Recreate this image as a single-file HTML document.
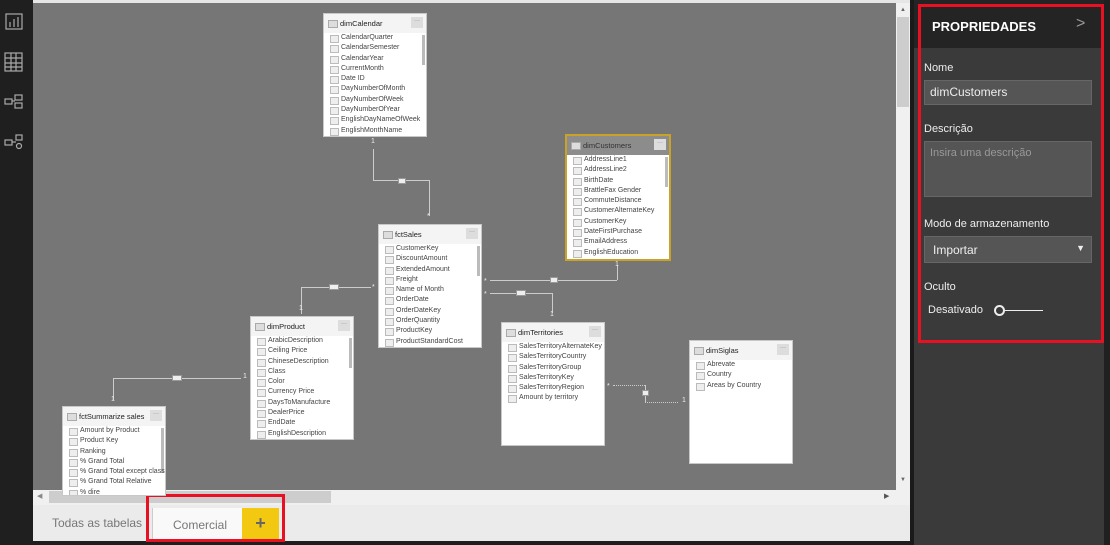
<!DOCTYPE html>
<html><head><meta charset="utf-8">
<style>
*{margin:0;padding:0;box-sizing:border-box}
body{width:1110px;height:545px;overflow:hidden;background:#1e1e1e;font-family:"Liberation Sans",sans-serif;position:relative}
.abs{position:absolute}
#nav{left:0;top:0;width:33px;height:545px;background:#1f1f1f}
#canvas{left:33px;top:3px;width:863px;height:487px;background:#767676}
#vs{left:896px;top:3px;width:14px;height:487px;background:#f0f0f0}
#hs{left:33px;top:490px;width:877px;height:15px;background:#f0f0f0}
#tabs{left:33px;top:505px;width:877px;height:36px;background:#ebebeb}
.tbl{position:absolute;background:#fff;border:1px solid #c8c8c8;overflow:hidden;font-size:7px;color:#444}
.tbl .h{height:19px;background:#f4f4f4;font-size:7.5px;padding:5px 0 0 16px;position:relative;color:#222}
.tbl .h:before{content:"";position:absolute;left:4px;top:6px;width:8px;height:6px;border:1px solid #aaa;background:#ddd}
.tbl .h i{position:absolute;right:3px;top:3px;width:12px;height:11px;background:#ddd;font-style:normal;font-size:6px;text-align:center;line-height:9px;color:#777}
.tbl .r{height:10.3px;line-height:10px;padding-left:17px;position:relative;white-space:nowrap}
.tbl .r:before{content:"";position:absolute;left:6px;top:2px;width:7px;height:6px;border:1px solid #bbb;background:#eee}
.tbl .sb{position:absolute;right:1px;top:21px;width:3px;height:30px;background:#bbb}
.ln{position:absolute;background:#ccc}
.num{position:absolute;color:#eee;font-size:7px}
.kb{position:absolute;width:8px;height:6px;background:#eee;border:1px solid #999}
</style></head><body>
<div id="nav" class="abs">
<svg width="33" height="160" style="position:absolute;left:0;top:0">
<g fill="none" stroke="#aaa" stroke-width="1.2">
<rect x="6" y="14" width="16" height="15"/><path d="M10 27v-5M14 27v-8M18 27v-10"/>
<rect x="5" y="53" width="17" height="18"/><path d="M5 58h17M5 63h17M5 67h17M11 53v18M16 53v18"/>
<rect x="5" y="99" width="7" height="5"/><rect x="15" y="95" width="7" height="5"/><rect x="15" y="103" width="7" height="5"/><path d="M12 101h3"/>
<rect x="5" y="140" width="7" height="5"/><rect x="16" y="135" width="6" height="5"/><circle cx="19" cy="146" r="2.5"/><path d="M12 142h4"/>
</g></svg>
</div>
<div id="canvas" class="abs"></div>
<div id="vs" class="abs"><div class="abs" style="left:1px;top:14px;width:12px;height:90px;background:#cdcdcd"></div><div class="abs" style="left:4px;top:4px;font-size:6px;color:#666">▲</div><div class="abs" style="left:4px;top:474px;font-size:6px;color:#666">▼</div></div>
<div id="hs" class="abs"><div class="abs" style="left:16px;top:1px;width:282px;height:12px;background:#cdcdcd"></div><div class="abs" style="left:4px;top:2px;font-size:7px;color:#888">◀</div><div class="abs" style="left:851px;top:2px;font-size:7px;color:#555">▶</div></div>
<div id="tabs" class="abs">
<div class="abs" style="left:19px;top:11px;font-size:12px;color:#777">Todas as tabelas</div>
<div class="abs" style="left:119px;top:3px;width:90px;height:31px;background:#f9f9f9;border-left:1px solid #ccc"><div style="padding:10px 0 0 20px;font-size:12px;color:#777">Comercial</div></div>
<div class="abs" style="left:209px;top:3px;width:37px;height:31px;background:#f2c811;color:#666;font-size:18px;font-weight:bold;text-align:center;line-height:30px">+</div>
<div class="abs" style="left:113px;top:-11px;width:139px;height:48px;border:3px solid #e81123"></div>
</div>
<div class="abs" style="left:910px;top:0;width:4px;height:545px;background:#1a1a1a"></div>
<div class="abs" style="left:914px;top:0;width:196px;height:545px;background:#3a3a3a"></div>
<div class="abs" style="left:914px;top:0;width:196px;height:48px;background:#242424"></div>
<div class="abs" style="left:1104px;top:0;width:6px;height:545px;background:#202020"></div>
<div class="abs" style="left:932px;top:19px;color:#fff;font-size:13px;font-weight:bold">PROPRIEDADES</div>
<div class="abs" style="left:1076px;top:15px;color:#999;font-size:16px">&gt;</div>
<div class="abs" style="left:924px;top:62px;color:#eee;font-size:11px">Nome</div>
<div class="abs" style="left:924px;top:80px;width:168px;height:25px;background:#555;border:1px solid #666;color:#eee;font-size:12px;padding:4px 5px">dimCustomers</div>
<div class="abs" style="left:924px;top:123px;color:#eee;font-size:11px">Descrição</div>
<div class="abs" style="left:924px;top:141px;width:168px;height:56px;background:#555;border:1px solid #666;color:#999;font-size:11px;padding:5px 5px">Insira uma descrição</div>
<div class="abs" style="left:924px;top:218px;color:#eee;font-size:11px">Modo de armazenamento</div>
<div class="abs" style="left:924px;top:236px;width:168px;height:27px;background:#555;border:1px solid #666;color:#eee;font-size:12px;padding:6px 8px">Importar<span style="position:absolute;right:6px;top:6px;font-size:9px">▼</span></div>
<div class="abs" style="left:924px;top:281px;color:#eee;font-size:11px">Oculto</div>
<div class="abs" style="left:928px;top:304px;color:#eee;font-size:11px">Desativado</div>
<div class="abs" style="left:994px;top:305px;width:11px;height:11px;border:2px solid #eee;border-radius:50%"></div>
<div class="abs" style="left:1005px;top:310px;width:38px;height:1px;background:#eee"></div>
<div class="abs" style="left:918px;top:4px;width:186px;height:339px;border:3px solid #e81123"></div>

<!-- lines -->
<div class="ln" style="left:373px;top:149px;width:1px;height:31px"></div>
<div class="ln" style="left:373px;top:180px;width:56px;height:1px"></div>
<div class="ln" style="left:429px;top:180px;width:1px;height:36px"></div>
<div class="kb" style="left:398px;top:178px"></div>
<div class="num" style="left:371px;top:138px">1</div><div class="num" style="left:427px;top:213px">*</div>
<div class="ln" style="left:617px;top:265px;width:1px;height:15px"></div>
<div class="ln" style="left:490px;top:280px;width:127px;height:1px"></div>
<div class="kb" style="left:550px;top:277px"></div>
<div class="num" style="left:615px;top:261px">1</div><div class="num" style="left:484px;top:278px">*</div>
<div class="ln" style="left:490px;top:293px;width:62px;height:1px"></div>
<div class="ln" style="left:552px;top:293px;width:1px;height:20px"></div>
<div class="kb" style="left:516px;top:290px;width:10px"></div>
<div class="num" style="left:550px;top:311px">1</div><div class="num" style="left:484px;top:291px">*</div>
<div class="ln" style="left:301px;top:287px;width:1px;height:27px"></div>
<div class="ln" style="left:301px;top:287px;width:70px;height:1px"></div>
<div class="kb" style="left:329px;top:284px;width:10px"></div>
<div class="num" style="left:299px;top:305px">1</div><div class="num" style="left:372px;top:284px">*</div>
<div class="ln" style="left:113px;top:378px;width:1px;height:22px"></div>
<div class="ln" style="left:113px;top:378px;width:128px;height:1px"></div>
<div class="kb" style="left:172px;top:375px;width:10px"></div>
<div class="num" style="left:111px;top:396px">1</div><div class="num" style="left:243px;top:373px">1</div>
<div class="ln" style="left:613px;top:385px;width:32px;height:0;border-top:1px dotted #ccc;background:none"></div>
<div class="ln" style="left:645px;top:385px;width:1px;height:17px"></div>
<div class="ln" style="left:645px;top:402px;width:33px;height:0;border-top:1px dotted #ccc;background:none"></div>
<div class="kb" style="left:642px;top:390px;width:7px"></div>
<div class="num" style="left:607px;top:383px">*</div><div class="num" style="left:682px;top:397px">1</div>

<!-- tables -->
<div class="tbl" style="left:323px;top:13px;width:104px;height:124px"><div class="h">dimCalendar<i>···</i></div><div class="sb"></div>
<div class="r">CalendarQuarter</div><div class="r">CalendarSemester</div><div class="r">CalendarYear</div><div class="r">CurrentMonth</div><div class="r">Date ID</div><div class="r">DayNumberOfMonth</div><div class="r">DayNumberOfWeek</div><div class="r">DayNumberOfYear</div><div class="r">EnglishDayNameOfWeek</div><div class="r">EnglishMonthName</div><div class="r">FiscalQ</div></div>

<div class="tbl" style="left:565px;top:134px;width:106px;height:127px;border:2px solid #c9a227"><div class="h" style="background:#8c8c8c;color:#333">dimCustomers<i>···</i></div><div class="sb"></div>
<div class="r">AddressLine1</div><div class="r">AddressLine2</div><div class="r">BirthDate</div><div class="r">BrattleFax Gender</div><div class="r">CommuteDistance</div><div class="r">CustomerAlternateKey</div><div class="r">CustomerKey</div><div class="r">DateFirstPurchase</div><div class="r">EmailAddress</div><div class="r">EnglishEducation</div><div class="r">EnglishOcc</div></div>

<div class="tbl" style="left:378px;top:224px;width:104px;height:124px"><div class="h">fctSales<i>···</i></div><div class="sb"></div>
<div class="r">CustomerKey</div><div class="r">DiscountAmount</div><div class="r">ExtendedAmount</div><div class="r">Freight</div><div class="r">Name of Month</div><div class="r">OrderDate</div><div class="r">OrderDateKey</div><div class="r">OrderQuantity</div><div class="r">ProductKey</div><div class="r">ProductStandardCost</div><div class="r">ProductUnit</div></div>

<div class="tbl" style="left:250px;top:316px;width:104px;height:124px"><div class="h">dimProduct<i>···</i></div><div class="sb"></div>
<div class="r">ArabicDescription</div><div class="r">Ceiling Price</div><div class="r">ChineseDescription</div><div class="r">Class</div><div class="r">Color</div><div class="r">Currency Price</div><div class="r">DaysToManufacture</div><div class="r">DealerPrice</div><div class="r">EndDate</div><div class="r">EnglishDescription</div><div class="r">EnglishProd</div></div>

<div class="tbl" style="left:501px;top:322px;width:104px;height:124px"><div class="h">dimTerritories<i>···</i></div>
<div class="r">SalesTerritoryAlternateKey</div><div class="r">SalesTerritoryCountry</div><div class="r">SalesTerritoryGroup</div><div class="r">SalesTerritoryKey</div><div class="r">SalesTerritoryRegion</div><div class="r">Amount by territory</div></div>

<div class="tbl" style="left:689px;top:340px;width:104px;height:124px"><div class="h">dimSiglas<i>···</i></div>
<div class="r">Abrevate</div><div class="r">Country</div><div class="r">Areas by Country</div></div>

<div class="tbl" style="left:62px;top:406px;width:104px;height:90px"><div class="h">fctSummarize sales<i>···</i></div><div class="sb" style="height:45px"></div>
<div class="r">Amount by Product</div><div class="r">Product Key</div><div class="r">Ranking</div><div class="r">% Grand Total</div><div class="r">% Grand Total except class</div><div class="r">% Grand Total Relative</div><div class="r">% dire</div></div>

<div class="abs" style="left:33px;top:0;width:877px;height:3px;background:#e6e6e6"></div>
</body></html>
